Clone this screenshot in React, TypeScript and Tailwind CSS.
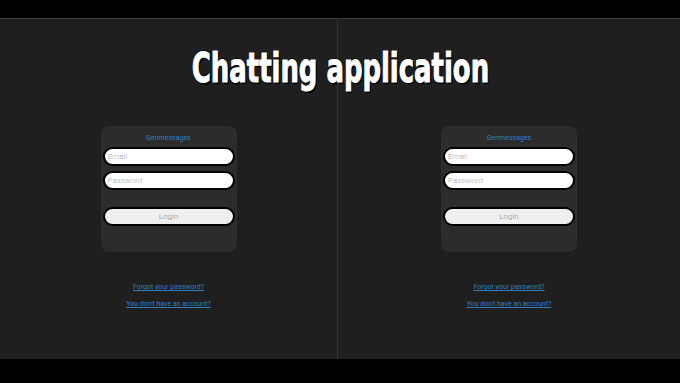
import React from 'react';

const Panel: React.FC<{ className?: string }> = ({ className = '' }) => (
  <div className={`flex flex-col items-center ${className}`}>
    <div className="mt-[107px] w-[136px] h-[126px] bg-[#2c2c2c] rounded-[8px] flex flex-col items-center px-[2px]">
      <p className="mt-[7px] text-[7px] leading-[10px] text-[#2f7fc4]">Genmessages</p>
      <div className="mt-[4px] w-full h-[19px] bg-white border-2 border-black rounded-full flex items-center px-[3px]">
        <span className="text-[8px] font-light text-[#a8a8a8]">Email</span>
      </div>
      <div className="mt-[5px] w-full h-[19px] bg-white border-2 border-black rounded-full flex items-center px-[3px]">
        <span className="text-[8px] font-light text-[#a8a8a8]">Password</span>
      </div>
      <div className="mt-[17px] w-full h-[19px] bg-[#efefef] border-2 border-black rounded-full flex items-center justify-center">
        <span className="text-[8px] font-light text-[#8a8a8a]">Login</span>
      </div>
    </div>
    <a className="mt-[30px] text-[7px] leading-[10px] text-[#2f7fc4] underline">Forgot your password?</a>
    <a className="mt-[7px] text-[7px] leading-[10px] text-[#2f7fc4] underline">You don't have an account?</a>
  </div>
);

export default function App() {
  return (
    <div className="w-[680px] h-[383px] bg-black flex flex-col" style={{ fontFamily: 'Roboto, "Liberation Sans", sans-serif' }}>
      <div className="h-[18px]" />
      <div className="relative h-[341px] bg-[#1f1f1f] border-t border-[#3c3c3c] flex">
        <Panel className="w-[337px]" />
        <div className="w-px bg-[#333]" />
        <Panel className="flex-1" />
        <div className="absolute left-0 right-0 top-[25px] flex justify-center">
          <h1
            className="inline-block text-white text-[40px] leading-[48px] font-bold scale-x-[0.72]"
            style={{ fontFamily: '"DejaVu Sans Condensed", "DejaVu Sans", sans-serif', WebkitTextStroke: '1px #fff', textShadow: '2px 2px 0 #000, -1px -1px 0 #000, 1px -1px 0 #000, -1px 1px 0 #000' }}
          >
            Chatting application
          </h1>
        </div>
      </div>
    </div>
  );
}
